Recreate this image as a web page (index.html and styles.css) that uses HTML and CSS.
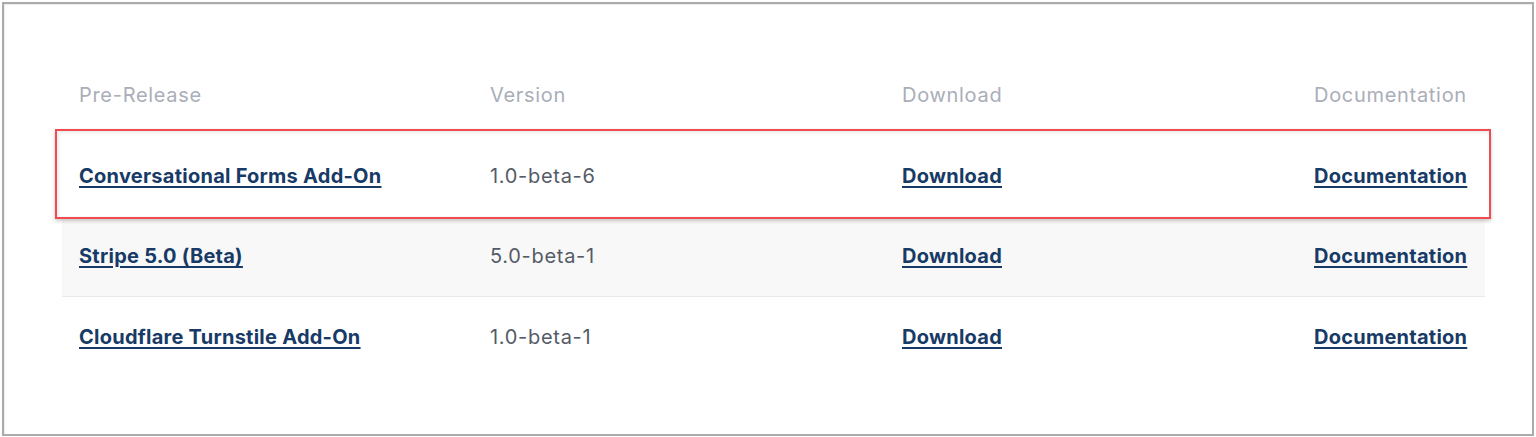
FILE: index.html
```html
<!DOCTYPE html>
<html lang="en">
<head>
<meta charset="utf-8">
<title>Pre-Release Add-Ons</title>
<link rel="stylesheet" href="styles.css">
</head>
<body>
<div class="frame">
  <div class="table">
    <div class="row head">
      <div class="cell">Pre-Release</div>
      <div class="cell">Version</div>
      <div class="cell">Download</div>
      <div class="cell">Documentation</div>
    </div>
    <div class="row highlight">
      <div class="cell"><a href="#">Conversational Forms Add-On</a></div>
      <div class="cell ver">1.0-beta-6</div>
      <div class="cell"><a href="#">Download</a></div>
      <div class="cell"><a href="#">Documentation</a></div>
    </div>
    <div class="row alt">
      <div class="cell"><a href="#">Stripe 5.0 (Beta)</a></div>
      <div class="cell ver">5.0-beta-1</div>
      <div class="cell"><a href="#">Download</a></div>
      <div class="cell"><a href="#">Documentation</a></div>
    </div>
    <div class="row last">
      <div class="cell"><a href="#">Cloudflare Turnstile Add-On</a></div>
      <div class="cell ver">1.0-beta-1</div>
      <div class="cell"><a href="#">Download</a></div>
      <div class="cell"><a href="#">Documentation</a></div>
    </div>
  </div>
</div>
</body>
</html>
```
FILE: styles.css
```css
html, body {
  margin: 0;
  padding: 0;
  background: #ffffff;
}
body {
  font-family: "Inter", "Liberation Sans", sans-serif;
  font-size: 20px;
  letter-spacing: 0.7px;
}
.frame {
  box-sizing: border-box;
  margin: 2px;
  height: 434px;
  border: 2px solid #ababab;
  box-shadow: inset 1px 1px 1px rgba(0,0,0,0.08);
  padding: 79px 47px 0 58px;
}
.table {
  width: 1423px;
}
.row {
  display: grid;
  grid-template-columns: 411px 412px 412px 1fr;
  padding: 0 17px;
  align-items: center;
  height: 80px;
  border-bottom: 1px solid #e8eaee;
  background: #ffffff;
}
.row.head {
  height: 24px;
  line-height: 24px;
  padding-bottom: 28px;
  border-bottom: none;
  color: #a9aeb8;
}
.row.highlight {
  position: relative;
  height: 81px;
  border-bottom: none;
}
.row.highlight::after {
  content: "";
  position: absolute;
  left: -7px;
  right: -6px;
  top: -6px;
  bottom: -3px;
  border: 2px solid #f04c4f;
  box-shadow: 0 2px 4px rgba(0,0,0,0.22), inset 2px 2px 3px rgba(0,0,0,0.08);
  pointer-events: none;
}
.row.alt {
  background: #f8f8f9;
}
.row.last {
  border-bottom: none;
}
.cell a {
  color: #173a66;
  font-weight: 700;
  letter-spacing: 0.25px;
  text-decoration: underline;
  text-decoration-thickness: 2px;
  text-underline-offset: 3px;
}
.ver {
  color: #555b66;
}
```
